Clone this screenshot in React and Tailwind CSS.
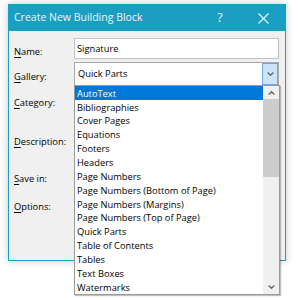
import React from "react";

const items = [
  "AutoText",
  "Bibliographies",
  "Cover Pages",
  "Equations",
  "Footers",
  "Headers",
  "Page Numbers",
  "Page Numbers (Bottom of Page)",
  "Page Numbers (Margins)",
  "Page Numbers (Top of Page)",
  "Quick Parts",
  "Table of Contents",
  "Tables",
  "Text Boxes",
  "Watermarks",
];

function Chevron({ up = false, color = "#606060" }) {
  return (
    <svg width="7" height="4" viewBox="0 0 7 4" className="block">
      <path
        d={up ? "M0.6 3.5 L3.5 0.7 L6.4 3.5" : "M0.6 0.5 L3.5 3.3 L6.4 0.5"}
        fill="none"
        stroke={color}
        strokeWidth="1.2"
      />
    </svg>
  );
}

function Label({ acc, rest }) {
  return (
    <span className="text-[9.3px] text-black whitespace-nowrap">
      <span className="underline underline-offset-[1.5px] decoration-[0.8px]">{acc}</span>
      {rest}
    </span>
  );
}

export default function App() {
  return (
    <div
      className="relative w-[298px] h-[300px] bg-white overflow-hidden"
      style={{ fontFamily: '"Open Sans", "Noto Sans", sans-serif' }}
    >
      <div className="absolute left-[8px] top-[4px] w-[278px] h-[257px] border border-[#1a9fc2] bg-[#f0f0f0] shadow-[0_0_8px_rgba(0,0,0,0.22)] flex flex-col">
        {/* Title bar */}
        <div className="h-[26px] bg-[#1a9fc2] flex items-center pl-[5px] shrink-0">
          <span className="text-[10.5px] text-[#e6f5f9] whitespace-nowrap">Create New Building Block</span>
          <span className="ml-auto w-[14px] text-center text-[12.5px] text-[#e6f5f9] mr-[31px]">?</span>
          <svg width="11" height="11" viewBox="0 0 11 11" className="mr-[16px]">
            <path d="M0.5 0.5 L10.5 10.5 M10.5 0.5 L0.5 10.5" stroke="#e6f5f9" strokeWidth="1.1" />
          </svg>
        </div>
        {/* Body */}
        <div className="flex flex-col px-[5px]">
          <div className="mt-[7px] h-[21px] flex items-center">
            <div className="w-[60px]"><Label acc="N" rest="ame:" /></div>
            <div className="w-[205px] h-[21px] bg-white border border-[#c2c2c2] flex items-center pl-[2px]">
              <span className="text-[9.3px] text-black">Signature</span>
            </div>
          </div>
          <div className="mt-[3px] h-[24px] flex items-center">
            <div className="w-[60px]"><Label acc="G" rest="allery:" /></div>
            <div className="w-[205px] h-[24px] bg-white border border-[#a9a9a9] flex items-center pl-[3px]">
              <span className="text-[9.3px] text-black">Quick Parts</span>
              <div className="ml-auto h-[22px] w-[16px] bg-[#cce4f7] border border-[#6fa8dc] flex items-center justify-center">
                <Chevron />
              </div>
            </div>
          </div>
          <div className="mt-[5px] h-[24px] flex items-center">
            <Label acc="C" rest="ategory:" />
          </div>
          <div className="mt-[15px] h-[24px] flex items-center">
            <Label acc="D" rest="escription:" />
          </div>
          <div className="mt-[13px] h-[24px] flex items-center">
            <Label acc="S" rest="ave in:" />
          </div>
          <div className="mt-[4px] h-[24px] flex items-center">
            <Label acc="O" rest="ptions:" />
          </div>
        </div>
      </div>

      {/* Dropdown list */}
      <div className="absolute left-[74px] top-[85px] w-[206px] h-[210px] bg-white border border-[#9a9a9a] shadow-[1px_1px_1px_rgba(0,0,0,0.25)] flex">
        <div className="flex-1 flex flex-col">
          {items.map((it, i) => (
            <div
              key={it}
              className={
                "h-[13.85px] flex items-center pl-[2px] pt-[1px] text-[9.3px] leading-none whitespace-nowrap " +
                (i === 0 ? "bg-[#0078d7] text-white" : "text-black")
              }
            >
              {it}
            </div>
          ))}
        </div>
        <div className="w-[16px] bg-[#f0f0f0] flex flex-col">
          <div className="h-[13px] flex items-center justify-center">
            <Chevron up />
          </div>
          <div className="h-[78px] bg-[#cdcdcd]" />
          <div className="flex-1" />
          <div className="h-[15px] flex items-center justify-center">
            <Chevron />
          </div>
        </div>
      </div>
    </div>
  );
}
